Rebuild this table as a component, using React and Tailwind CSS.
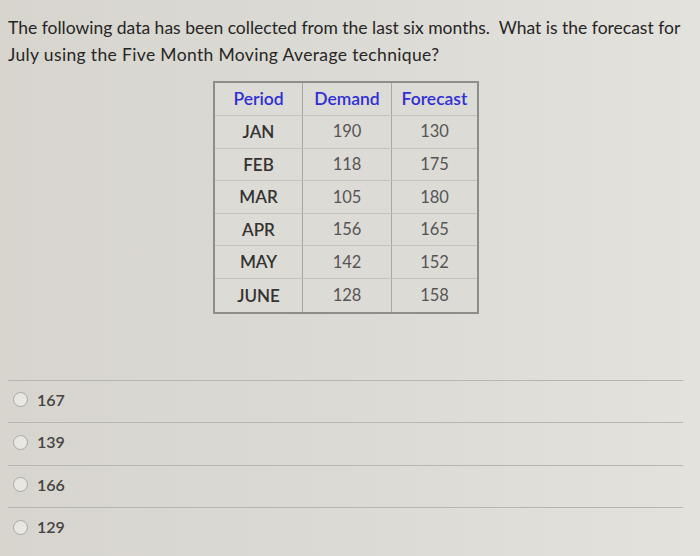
export default function App() {
  const rows = [
    ["JAN", 190, 130],
    ["FEB", 118, 175],
    ["MAR", 105, 180],
    ["APR", 156, 165],
    ["MAY", 142, 152],
    ["JUNE", 128, 158],
  ];
  const options = ["167", "139", "166", "129"];

  return (
    <div className="w-[700px] h-[556px] overflow-hidden bg-gradient-to-r from-[#d7d5ce] via-[#dcdad4] to-[#e3e2dd] font-['Lato',sans-serif] text-[#2b2b2b]">
      {/* Question */}
      <p className="px-[8px] pt-[14px] text-[17.5px] leading-[27px] whitespace-nowrap text-[#262626]">
        The following data has been collected from the last six months.{"\u00a0"} What is the forecast for
        <br />
        <span className="tracking-[0.35px]">July using the Five Month Moving Average technique?</span>
      </p>

      {/* Table */}
      <div className="ml-[213px] mt-[13px] w-[266px] border-2 border-[#8d8d8a] bg-[#dddbd5]">
        <div className="grid grid-cols-[88px_89px_85px] h-[33px] items-center border-b border-[#c4c3be] text-[17.5px] font-semibold text-[#2f2fd4]">
          <div className="text-center border-r border-[#a9a8a3] h-full flex items-center justify-center">Period</div>
          <div className="text-center border-r border-[#a9a8a3] h-full flex items-center justify-center">Demand</div>
          <div className="text-center h-full flex items-center justify-center">Forecast</div>
        </div>
        {rows.map(([m, d, f], i) => (
          <div
            key={m}
            className={`grid grid-cols-[88px_89px_85px] h-[32.6px] text-[16.5px] ${
              i < rows.length - 1 ? "border-b border-[#c4c3be]" : ""
            }`}
          >
            <div className="border-r border-[#a9a8a3] flex items-center justify-center text-[17px] font-semibold text-[#333]">{m}</div>
            <div className="border-r border-[#a9a8a3] flex items-center justify-center text-[#555]">{d}</div>
            <div className="flex items-center justify-center text-[#555]">{f}</div>
          </div>
        ))}
      </div>

      {/* Options */}
      <div className="mt-[66px] ml-[8px] w-[675px]">
        {options.map((o) => (
          <div key={o} className="h-[42.5px] border-t border-[#b7b6b0] flex items-center pl-[5px] pb-[3px]">
            <span className="w-[15px] h-[15px] rounded-full border border-[#a8a8a4] bg-[#e8e7e2]" />
            <span className="ml-[9px] text-[16px] font-semibold text-[#444]">{o}</span>
          </div>
        ))}
      </div>
    </div>
  );
}
